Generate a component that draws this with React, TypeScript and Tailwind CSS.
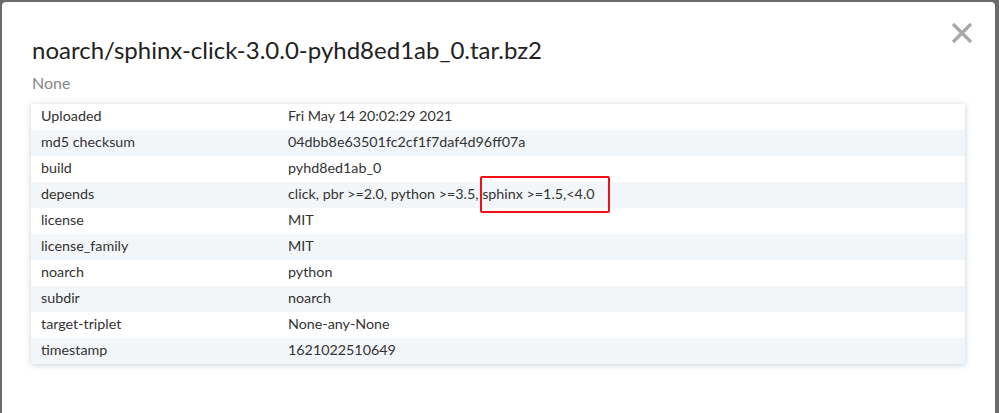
import React from "react";

const rows: [string, string][] = [
  ["Uploaded", "Fri May 14 20:02:29 2021"],
  ["md5 checksum", "04dbb8e63501fc2cf1f7daf4d96ff07a"],
  ["build", "pyhd8ed1ab_0"],
  ["depends", "click, pbr >=2.0, python >=3.5, sphinx >=1.5,<4.0"],
  ["license", "MIT"],
  ["license_family", "MIT"],
  ["noarch", "python"],
  ["subdir", "noarch"],
  ["target-triplet", "None-any-None"],
  ["timestamp", "1621022510649"],
];

export default function App() {
  return (
    <div className="w-[999px] h-[413px] overflow-hidden bg-[#6b6b6b] pt-[2px] pl-[2px] pr-[4px]" style={{ fontFamily: "Lato, 'Open Sans', sans-serif" }}>
      <div className="relative bg-white rounded-[4px] h-[440px] pt-[33px] pl-[30px] pr-[30px]">
        <button className="absolute right-[21px] top-[19px] w-[24px] h-[24px] flex items-center justify-center">
          <svg width="22" height="22" viewBox="0 0 22 22">
            <path d="M2 2 L20 20 M20 2 L2 20" stroke="#a8a8a8" strokeWidth="3.2" strokeLinecap="butt" />
          </svg>
        </button>
        <h1 className="text-[24px] leading-[30px] text-[#222]">noarch/sphinx-click-3.0.0-pyhd8ed1ab_0.tar.bz2</h1>
        <p className="mt-[8px] text-[16px] leading-[20px] text-[#888]">None</p>
        <div className="relative mt-[11px] w-[934px] ml-[-1px] shadow-[0_1px_6px_rgba(90,120,140,0.35)]">
          {rows.map(([k, v], i) => (
            <div key={k} className={`flex h-[26px] items-center pb-[3px] text-[14.3px] text-[#333] ${i % 2 === 1 ? "bg-[#f3f6f9]" : "bg-white"}`}>
              <div className="w-[257px] pl-[10px]">{k}</div>
              <div>{v}</div>
            </div>
          ))}
          <div className="absolute left-[449px] top-[72px] w-[130px] h-[37px] border-2 border-[#f0101a] rounded-[2px]" />
        </div>
      </div>
    </div>
  );
}
